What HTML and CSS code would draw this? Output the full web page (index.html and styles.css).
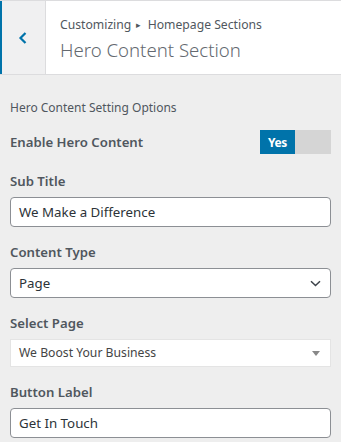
FILE: index.html
```html
<!DOCTYPE html>
<html>
<head>
<meta charset="utf-8">
<link rel="stylesheet" href="styles.css">
</head>
<body>
<div class="panel">
  <header class="head">
    <button class="back" aria-label="Back">
      <svg width="12" height="14" viewBox="0 0 12 14"><path d="M8.5 2 L3.5 7 L8.5 12" fill="none" stroke="#0073aa" stroke-width="2.2"/></svg>
    </button>
    <div class="titles">
      <div class="crumb">Customizing <span class="tri">▸</span> Homepage Sections</div>
      <div class="title">Hero Content Section</div>
    </div>
  </header>
  <main class="body">
    <div class="desc">Hero Content Setting Options</div>
    <div class="row">
      <span class="label">Enable Hero Content</span>
      <div class="toggle"><span class="yes">Yes</span><span class="no"></span></div>
    </div>
    <div class="field">
      <div class="label">Sub Title</div>
      <div class="input">We Make a Difference</div>
    </div>
    <div class="field">
      <div class="label">Content Type</div>
      <div class="input select">Page
        <svg class="chev" width="11" height="7" viewBox="0 0 11 7"><path d="M1 1.2 L5.5 5.5 L10 1.2" fill="none" stroke="#3c434a" stroke-width="1.5"/></svg>
      </div>
    </div>
    <div class="field">
      <div class="label">Select Page</div>
      <div class="s2">We Boost Your Business<span class="caret"></span></div>
    </div>
    <div class="field">
      <div class="label">Button Label</div>
      <div class="input">Get In Touch</div>
    </div>
  </main>
</div>
</body>
</html>
```

FILE: styles.css
```css
html, body { margin: 0; padding: 0; }
body {
  background: #eeeeee;
  font-family: "Noto Sans", "Open Sans", sans-serif;
  color: #50575e;
  width: 341px;
  height: 442px;
  overflow: hidden;
}
.head {
  display: flex;
  height: 73px;
  background: #fff;
  border-top: 1px solid #dcdcde;
  border-bottom: 1px solid #dcdcde;
  box-sizing: content-box;
}
.back {
  width: 46px;
  flex: none;
  background: #f0f0f1;
  border: 0;
  border-left: 2px solid #0073aa;
  border-right: 1px solid #dcdcde;
  display: flex;
  align-items: center;
  justify-content: center;
  padding: 0 2px 0 0;
  box-sizing: border-box;
}
.titles {
  padding: 14px 0 0 14px;
}
.crumb {
  font-size: 12.2px;
  line-height: 20px;
  color: #50575e;
}
.tri { font-size: 9px; position: relative; top: -1px; margin: 0 3px 0 2px; }
.title {
  font-size: 18.6px;
  font-weight: 300;
  line-height: 28px;
  color: #646970;
}
.body {
  padding: 25px 10px 0 10px;
}
.desc {
  font-size: 12px;
  line-height: 16px;
  color: #50575e;
  margin-bottom: 14px;
}
.label {
  font-size: 13.2px;
  font-weight: 600;
  color: #50575e;
  line-height: 20px;
}
.row {
  display: flex;
  justify-content: space-between;
  align-items: center;
  margin-bottom: 17px;
}
.toggle {
  display: flex;
  width: 71px;
  height: 24px;
}
.yes {
  width: 35px;
  background: #0073aa;
  color: #fff;
  font-weight: 700;
  font-size: 12px;
  letter-spacing: -0.3px;
  display: flex;
  align-items: center;
  justify-content: center;
}
.no { flex: 1; background: #d5d5d5; }
.field { margin-bottom: 15px; }
.field .label { margin-bottom: 6px; }
.input {
  height: 30px;
  box-sizing: border-box;
  background: #fff;
  border: 1px solid #8c8f94;
  border-radius: 4px;
  padding: 0 8px;
  font-size: 13.3px;
  line-height: 28px;
  color: #2c3338;
  position: relative;
}
.select .chev { position: absolute; right: 9px; top: 11px; }
.s2 {
  height: 28px;
  box-sizing: border-box;
  background: #fff;
  border: 1px solid #e4e4e4;
  padding: 0 8px;
  font-size: 12.2px;
  line-height: 26px;
  color: #444;
  position: relative;
}
.caret {
  position: absolute;
  right: 10px;
  top: 11px;
  border-left: 4px solid transparent;
  border-right: 4px solid transparent;
  border-top: 5px solid #888;
}
```
